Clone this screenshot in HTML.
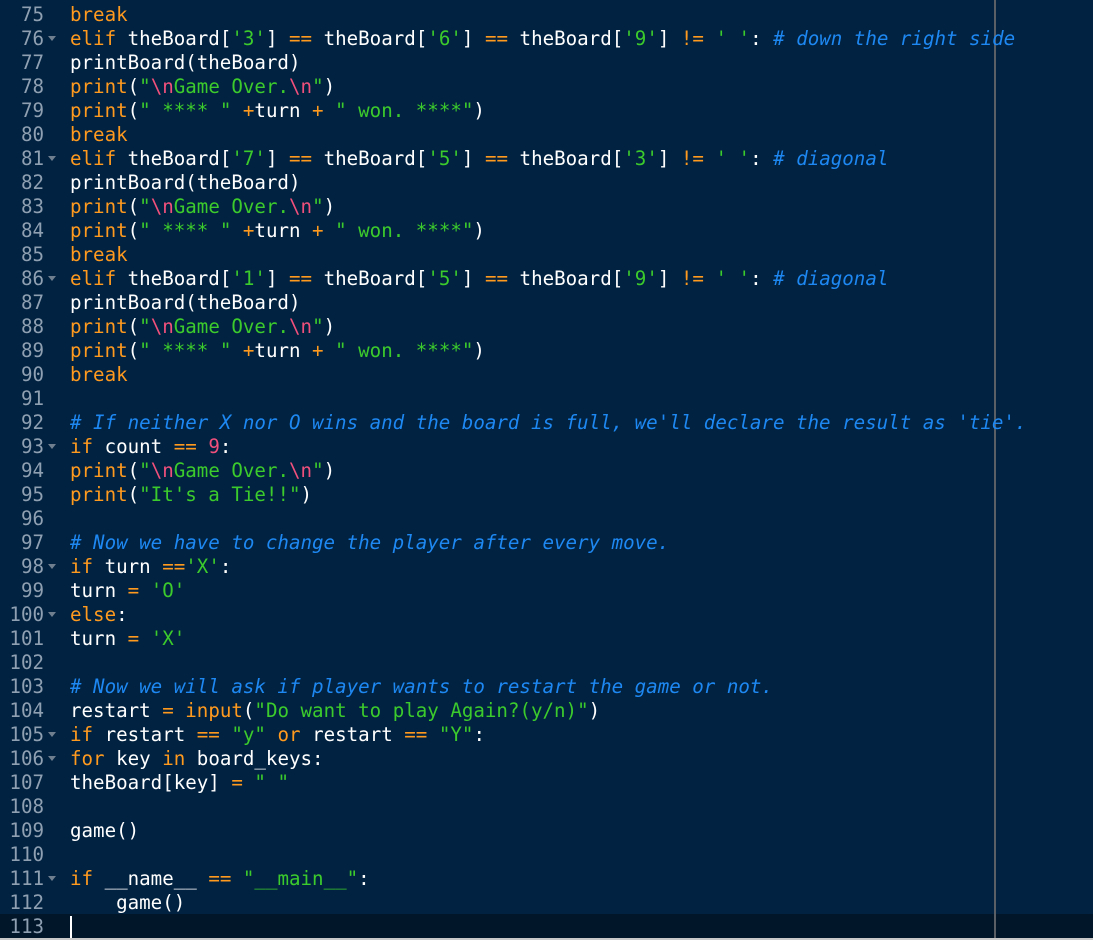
<!DOCTYPE html>
<html><head><meta charset="utf-8"><style>
html,body{margin:0;padding:0;}
body{width:1093px;height:940px;background:#012240;position:relative;overflow:hidden;font-family:"DejaVu Sans Mono","Liberation Mono",monospace;font-size:19.15px;color:#fff;}
.l{position:absolute;left:0;height:24px;line-height:24px;width:1093px;white-space:pre;margin-top:1px;}
.g{position:absolute;left:0;width:44px;text-align:right;color:#8fa0b2;}
.f{position:absolute;left:48px;top:9px;width:0;height:0;border-left:4px solid transparent;border-right:4px solid transparent;border-top:5px solid #6f7f90;}
.t{position:absolute;left:70px;}
.k{color:#ff9a1f}.s{color:#3ccb2c}.e{color:#f0507c}.c{color:#1e88f2;font-style:italic}.n{color:#f0507c}
#vl{position:absolute;left:994px;top:0;width:2px;height:938px;background:#5a5f66;}
#cur{position:absolute;left:0;top:914px;width:1093px;height:24px;background:#011628;}
#bot{position:absolute;left:0;top:938px;width:1093px;height:2px;background:#c8c8c8;}
#caret{position:absolute;left:70px;top:916px;width:2px;height:22px;background:#fff;}
</style></head><body>
<div id="cur"></div><div id="vl"></div><div id="bot"></div>
<div class="l" style="top:2px"><span class="g">75</span><span class="t"><span class="k">break</span></span></div>
<div class="l" style="top:26px"><span class="g">76</span><span class="f"></span><span class="t"><span class="k">elif</span> theBoard[<span class="s">'3'</span>] <span class="k">==</span> theBoard[<span class="s">'6'</span>] <span class="k">==</span> theBoard[<span class="s">'9'</span>] <span class="k">!=</span> <span class="s">' '</span>: <span class="c"># down the right side</span></span></div>
<div class="l" style="top:50px"><span class="g">77</span><span class="t">printBoard(theBoard)</span></div>
<div class="l" style="top:74px"><span class="g">78</span><span class="t"><span class="k">print</span>(<span class="s">"<span class="e">\n</span>Game Over.<span class="e">\n</span>"</span>)</span></div>
<div class="l" style="top:98px"><span class="g">79</span><span class="t"><span class="k">print</span>(<span class="s">" **** "</span> <span class="k">+</span>turn <span class="k">+</span> <span class="s">" won. ****"</span>)</span></div>
<div class="l" style="top:122px"><span class="g">80</span><span class="t"><span class="k">break</span></span></div>
<div class="l" style="top:146px"><span class="g">81</span><span class="f"></span><span class="t"><span class="k">elif</span> theBoard[<span class="s">'7'</span>] <span class="k">==</span> theBoard[<span class="s">'5'</span>] <span class="k">==</span> theBoard[<span class="s">'3'</span>] <span class="k">!=</span> <span class="s">' '</span>: <span class="c"># diagonal</span></span></div>
<div class="l" style="top:170px"><span class="g">82</span><span class="t">printBoard(theBoard)</span></div>
<div class="l" style="top:194px"><span class="g">83</span><span class="t"><span class="k">print</span>(<span class="s">"<span class="e">\n</span>Game Over.<span class="e">\n</span>"</span>)</span></div>
<div class="l" style="top:218px"><span class="g">84</span><span class="t"><span class="k">print</span>(<span class="s">" **** "</span> <span class="k">+</span>turn <span class="k">+</span> <span class="s">" won. ****"</span>)</span></div>
<div class="l" style="top:242px"><span class="g">85</span><span class="t"><span class="k">break</span></span></div>
<div class="l" style="top:266px"><span class="g">86</span><span class="f"></span><span class="t"><span class="k">elif</span> theBoard[<span class="s">'1'</span>] <span class="k">==</span> theBoard[<span class="s">'5'</span>] <span class="k">==</span> theBoard[<span class="s">'9'</span>] <span class="k">!=</span> <span class="s">' '</span>: <span class="c"># diagonal</span></span></div>
<div class="l" style="top:290px"><span class="g">87</span><span class="t">printBoard(theBoard)</span></div>
<div class="l" style="top:314px"><span class="g">88</span><span class="t"><span class="k">print</span>(<span class="s">"<span class="e">\n</span>Game Over.<span class="e">\n</span>"</span>)</span></div>
<div class="l" style="top:338px"><span class="g">89</span><span class="t"><span class="k">print</span>(<span class="s">" **** "</span> <span class="k">+</span>turn <span class="k">+</span> <span class="s">" won. ****"</span>)</span></div>
<div class="l" style="top:362px"><span class="g">90</span><span class="t"><span class="k">break</span></span></div>
<div class="l" style="top:386px"><span class="g">91</span></div>
<div class="l" style="top:410px"><span class="g">92</span><span class="t"><span class="c"># If neither X nor O wins and the board is full, we'll declare the result as 'tie'.</span></span></div>
<div class="l" style="top:434px"><span class="g">93</span><span class="f"></span><span class="t"><span class="k">if</span> count <span class="k">==</span> <span class="n">9</span>:</span></div>
<div class="l" style="top:458px"><span class="g">94</span><span class="t"><span class="k">print</span>(<span class="s">"<span class="e">\n</span>Game Over.<span class="e">\n</span>"</span>)</span></div>
<div class="l" style="top:482px"><span class="g">95</span><span class="t"><span class="k">print</span>(<span class="s">"It's a Tie!!"</span>)</span></div>
<div class="l" style="top:506px"><span class="g">96</span></div>
<div class="l" style="top:530px"><span class="g">97</span><span class="t"><span class="c"># Now we have to change the player after every move.</span></span></div>
<div class="l" style="top:554px"><span class="g">98</span><span class="f"></span><span class="t"><span class="k">if</span> turn <span class="k">==</span><span class="s">'X'</span>:</span></div>
<div class="l" style="top:578px"><span class="g">99</span><span class="t">turn <span class="k">=</span> <span class="s">'O'</span></span></div>
<div class="l" style="top:602px"><span class="g">100</span><span class="f"></span><span class="t"><span class="k">else</span>:</span></div>
<div class="l" style="top:626px"><span class="g">101</span><span class="t">turn <span class="k">=</span> <span class="s">'X'</span></span></div>
<div class="l" style="top:650px"><span class="g">102</span></div>
<div class="l" style="top:674px"><span class="g">103</span><span class="t"><span class="c"># Now we will ask if player wants to restart the game or not.</span></span></div>
<div class="l" style="top:698px"><span class="g">104</span><span class="t">restart <span class="k">=</span> <span class="k">input</span>(<span class="s">"Do want to play Again?(y/n)"</span>)</span></div>
<div class="l" style="top:722px"><span class="g">105</span><span class="f"></span><span class="t"><span class="k">if</span> restart <span class="k">==</span> <span class="s">"y"</span> <span class="k">or</span> restart <span class="k">==</span> <span class="s">"Y"</span>:</span></div>
<div class="l" style="top:746px"><span class="g">106</span><span class="f"></span><span class="t"><span class="k">for</span> key <span class="k">in</span> board_keys:</span></div>
<div class="l" style="top:770px"><span class="g">107</span><span class="t">theBoard[key] <span class="k">=</span> <span class="s">" "</span></span></div>
<div class="l" style="top:794px"><span class="g">108</span></div>
<div class="l" style="top:818px"><span class="g">109</span><span class="t">game()</span></div>
<div class="l" style="top:842px"><span class="g">110</span></div>
<div class="l" style="top:866px"><span class="g">111</span><span class="f"></span><span class="t"><span class="k">if</span> __name__ <span class="k">==</span> <span class="s">"__main__"</span>:</span></div>
<div class="l" style="top:890px"><span class="g">112</span><span class="t">    game()</span></div>
<div class="l" style="top:914px"><span class="g">113</span></div>
<div id="caret"></div>
</body></html>
